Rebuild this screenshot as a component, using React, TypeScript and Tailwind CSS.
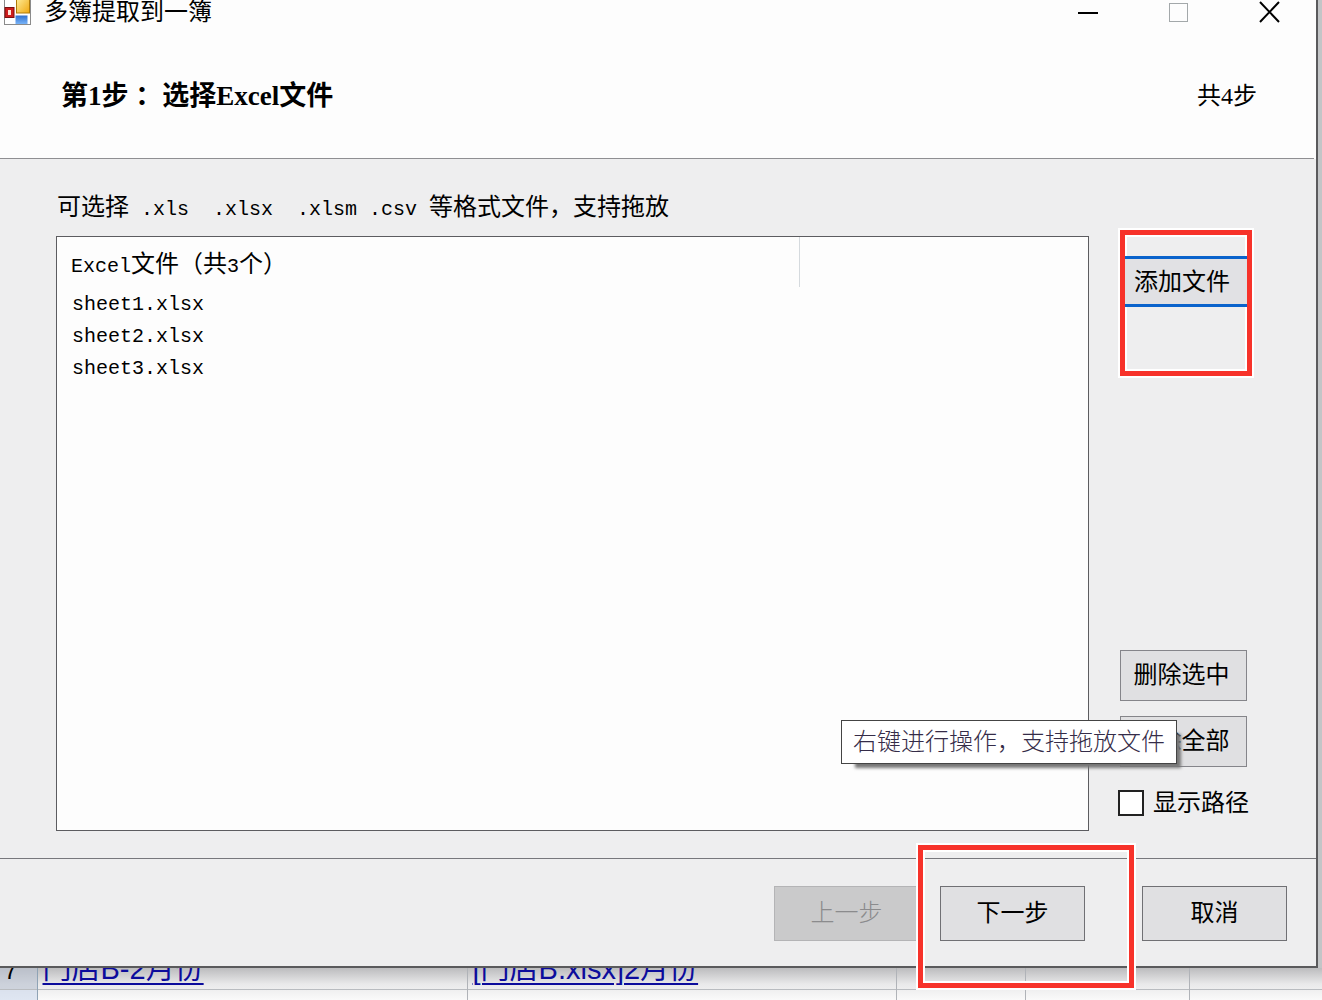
import { useState } from "react";

const files = ["sheet1.xlsx", "sheet2.xlsx", "sheet3.xlsx"];

const Mono = ({ children }: { children: string }) => (
  <span className="font-['Liberation_Mono','Noto_Sans_CJK_SC',monospace] text-xl leading-none whitespace-pre">
    {children}
  </span>
);

const AppIcon = () => (
  <svg width="27" height="25" viewBox="0 0 27 25" aria-hidden="true">
    <defs>
      <linearGradient id="gold" x1="0" y1="0" x2="1" y2="1">
        <stop offset="0" stopColor="#fff0a0" />
        <stop offset="1" stopColor="#f0a810" />
      </linearGradient>
      <linearGradient id="blue" x1="0" y1="0" x2="0" y2="1">
        <stop offset="0" stopColor="#2f6fd0" />
        <stop offset="1" stopColor="#78b4f8" />
      </linearGradient>
    </defs>
    <rect x="0.5" y="-4" width="26" height="28.5" fill="#fff" stroke="#8a8a8a" />
    <rect x="1" y="7.5" width="9" height="10" fill="#cc1c1c" stroke="#7a1010" />
    <rect x="4" y="10" width="3" height="5" fill="#ffe3d8" />
    <rect x="12.5" y="-3" width="13" height="16" fill="url(#gold)" stroke="#b07a08" />
    <rect x="11.5" y="15.5" width="12" height="8.5" fill="url(#blue)" />
  </svg>
);

const TitleBar = () => (
  <div className="flex h-6 items-center justify-between pr-9 pl-1">
    <div className="flex items-center gap-[13px]">
      <AppIcon />
      <span className="text-2xl leading-6">多簿提取到一簿</span>
    </div>
    <div className="flex items-center gap-[69px]">
      <button aria-label="最小化">
        <svg width="22" height="22" viewBox="0 0 22 22">
          <path d="M0 12h20" stroke="#000" strokeWidth="2" />
        </svg>
      </button>
      <button aria-label="最大化">
        <svg width="20" height="22" viewBox="0 0 20 22">
          <rect x="0.5" y="2.5" width="18" height="18" fill="none" stroke="#a3a8aa" />
        </svg>
      </button>
      <button aria-label="关闭">
        <svg width="22" height="22" viewBox="0 0 22 22">
          <path d="M2 1l19 20M21 1L2 21" stroke="#000" strokeWidth="2" />
        </svg>
      </button>
    </div>
  </div>
);

const FileList = () => (
  <div className="relative min-w-0 flex-1 border border-[#5c5c60] bg-[#fdfdfd]">
    <table className="w-full table-fixed border-collapse text-left">
      <thead>
        <tr className="h-[50px]">
          <th className="w-[72%] border-r border-[#d5dade] pt-1 pl-3.5 text-2xl font-normal">
            <Mono>Excel</Mono>文件（共<Mono>3</Mono>个）
          </th>
          <th></th>
        </tr>
      </thead>
      <tbody>
        {files.map((file) => (
          <tr key={file} className="h-8">
            <td className="pt-1 pl-[15px] leading-none" colSpan={2}>
              <Mono>{file}</Mono>
            </td>
          </tr>
        ))}
      </tbody>
    </table>
    <div
      role="tooltip"
      className="absolute -right-[89px] bottom-[66px] z-10 flex h-11 items-center border border-[#444] bg-white px-[11px] text-2xl font-light whitespace-nowrap text-[#352c48] shadow-[9px_9px_3px_-5px_#777]"
    >
      右键进行操作，支持拖放文件
    </div>
  </div>
);

const SideButtons = () => {
  const [showPath, setShowPath] = useState(false);

  return (
    <div className="flex w-[134px] flex-col justify-between pt-5 pb-[14px] text-2xl">
      <div className="relative ml-0.5">
        <div className="pointer-events-none absolute -top-[26px] left-0 h-[146px] w-full border-[5px] border-[#f7322a] shadow-[0_0_0_2px_#fff,inset_0_0_0_2px_#fff]" />
        <button className="relative mx-[5px] block h-[51px] w-[122px] border-y-3 border-[#0a63cc] bg-[#e1e1e4] pr-2">
          添加文件
        </button>
      </div>
      <div className="flex flex-col">
        <button className="ml-0.5 h-[51px] w-[127px] border border-[#85858a] bg-[#e0e0e2] pr-1">
          删除选中
        </button>
        <button className="mt-[15px] ml-0.5 h-[51px] w-[127px] border border-[#85858a] bg-[#e0e0e2] pr-1">
          清除全部
        </button>
        <label className="mt-[22px] flex h-7 items-center gap-[9px] whitespace-nowrap">
          <input
            type="checkbox"
            checked={showPath}
            onChange={(e) => setShowPath(e.target.checked)}
            className="h-[26px] w-[26px] shrink-0 appearance-none border-2 border-[#222] bg-white checked:bg-[#0a63cc]"
          />
          显示路径
        </label>
      </div>
    </div>
  );
};

const Footer = () => (
  <div className="flex h-[108px] justify-end border-t border-[#77777c] pt-[27px] pr-[29px] text-2xl">
    <button
      disabled
      className="h-[55px] w-[145px] border border-[#b4b4b6] bg-[#cacacb] font-light text-[#8b8b8d]"
    >
      上一步
    </button>
    <div className="relative mr-[57px] ml-[21px]">
      <button className="h-[55px] w-[145px] border border-[#707074] bg-[#e0e0e2]">
        下一步
      </button>
      <div className="pointer-events-none absolute -top-[41px] -right-[49px] -left-[22px] z-10 h-[143px] border-[5px] border-[#f7322a] shadow-[0_0_0_2px_#fff,inset_0_0_0_2px_#fff]" />
    </div>
    <button className="h-[55px] w-[145px] border border-[#707074] bg-[#e0e0e2]">
      取消
    </button>
  </div>
);

// bottom edge of the worksheet that shows below the dialog
const Worksheet = () => (
  <table className="w-full table-fixed border-collapse bg-linear-to-b from-[#bcbcbe] via-[#e9e9ea] to-[#fafafa] text-[29px] text-[#0c0c9c]">
    <colgroup>
      <col className="w-[37px]" />
      <col className="w-[430px]" />
      <col className="w-[429px]" />
      <col className="w-[129px]" />
      <col className="w-[164px]" />
      <col />
    </colgroup>
    <tbody>
      <tr className="border-b border-[#b9bcc0]">
        <th className="border-r border-[#8fa3b5] bg-[#b9c2d0]/60 p-0 font-normal text-black">
          <div className="flex h-[21px] items-end overflow-hidden pl-1 text-2xl leading-9">7</div>
        </th>
        <td className="border-r border-[#b0b3b8] p-0">
          <div className="flex h-[21px] items-end overflow-hidden pl-[5px] leading-10">
            <a href="#b2" className="underline decoration-2 underline-offset-4">
              门店B-2月份
            </a>
          </div>
        </td>
        <td className="border-r border-[#b0b3b8] p-0">
          <div className="flex h-[21px] items-end overflow-hidden pl-[5px] leading-10">
            <a href="#b-xlsx" className="underline decoration-2 underline-offset-4">
              [门店B.xlsx]2月份
            </a>
          </div>
        </td>
        <td className="border-r border-[#b0b3b8] p-0"></td>
        <td className="border-r border-[#b0b3b8] p-0"></td>
        <td className="p-0"></td>
      </tr>
      <tr className="h-[11px]">
        <th className="border-r border-[#8fa3b5] bg-[#cdd8ec]/60 p-0"></th>
        <td className="border-r border-[#b0b3b8] p-0"></td>
        <td className="border-r border-[#b0b3b8] p-0"></td>
        <td className="border-r border-[#b0b3b8] p-0"></td>
        <td className="border-r border-[#b0b3b8] p-0"></td>
        <td className="p-0"></td>
      </tr>
    </tbody>
  </table>
);

const App = () => {
  return (
    <div className="flex min-h-screen flex-col overflow-hidden bg-[#c3c5c7] font-['Liberation_Sans','Noto_Sans_CJK_SC',sans-serif] text-black">
      <main className="mr-1 flex flex-1 flex-col border-r-2 border-b-2 border-[#5a5a5c] bg-[#eeeeef]">
        <header className="bg-[#fdfdfd]">
          <TitleBar />
          <div className="mr-0.5 flex h-[135px] items-center justify-between border-b border-[#8f8f92] pt-2.5 pr-[57px] pl-[61px] font-['Liberation_Serif','Noto_Sans_CJK_SC',serif]">
            <h1 className="text-[27px] leading-8 font-bold">
              第1步 ：选择Excel文件
            </h1>
            <span className="text-2xl">共4步</span>
          </div>
        </header>
        <p className="pt-8 pb-[13px] pl-[57px] text-2xl leading-8">
          可选择<Mono>{" .xls  .xlsx  .xlsm .csv "}</Mono>等格式文件，支持拖放
        </p>
        <div className="flex flex-1 gap-[29px] pr-16 pb-[27px] pl-14">
          <FileList />
          <SideButtons />
        </div>
        <Footer />
      </main>
      <Worksheet />
    </div>
  );
};

export default App;
